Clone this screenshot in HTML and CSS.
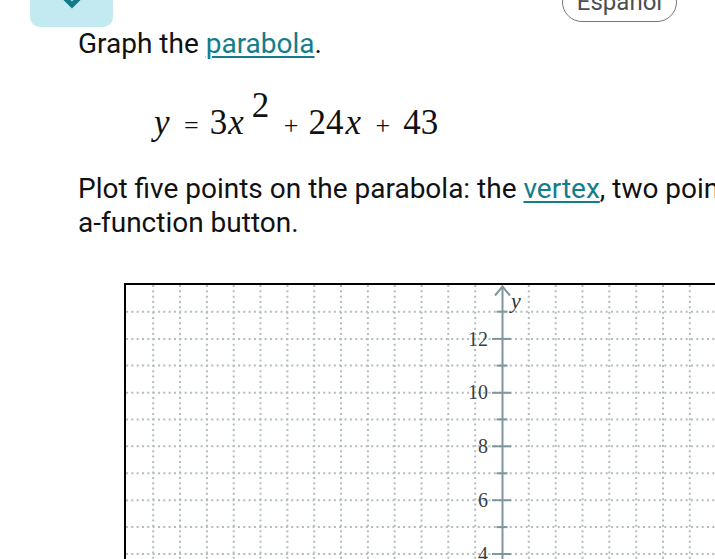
FILE: index.html
```html
<!DOCTYPE html>
<html lang="en">
<head>
<meta charset="utf-8">
<title>Graph the parabola</title>
<link rel="stylesheet" href="styles.css">
</head>
<body>
<div class="page">
  <header class="top">
    <button class="collapse" aria-label="Collapse">
      <svg class="chev" width="26" height="17" viewBox="0 0 26 17"><polyline points="2.5,2.5 13,13 23.5,2.5" fill="none" stroke="#0f7a89" stroke-width="5" stroke-linejoin="miter"/></svg>
    </button>
    <button class="lang">Español</button>
  </header>

  <p class="title">Graph the <a class="term" href="#">parabola</a>.</p>

  <div class="equation"><span class="var">y</span><span class="op op-eq">=</span><span class="num n3">3</span><span class="var vx1">x</span><span class="sup">2</span><span class="op op-p1">+</span><span class="num n24">24</span><span class="var vx2">x</span><span class="op op-p2">+</span><span class="num n43">43</span></div>

  <p class="instructions"><span class="line">Plot five points on the parabola: the <a class="term" href="#">vertex</a>, two points to the left of the vertex, and two points to the right of the vertex. Then click on the graph-</span><span class="line">a-function button.</span></p>

  <div class="graph">
    <svg class="plane" width="700" height="320" viewBox="0 0 700 320">
      <g transform="translate(-126 -286)">
        <g class="grid" stroke="#b2bdbf" stroke-width="2" stroke-dasharray="2 3.33" fill="none">
          <line x1="153.2" y1="286" x2="153.2" y2="606"/>
          <line x1="180.0" y1="286" x2="180.0" y2="606"/>
          <line x1="206.9" y1="286" x2="206.9" y2="606"/>
          <line x1="233.7" y1="286" x2="233.7" y2="606"/>
          <line x1="260.5" y1="286" x2="260.5" y2="606"/>
          <line x1="287.4" y1="286" x2="287.4" y2="606"/>
          <line x1="314.2" y1="286" x2="314.2" y2="606"/>
          <line x1="341.0" y1="286" x2="341.0" y2="606"/>
          <line x1="367.9" y1="286" x2="367.9" y2="606"/>
          <line x1="394.7" y1="286" x2="394.7" y2="606"/>
          <line x1="421.5" y1="286" x2="421.5" y2="606"/>
          <line x1="448.3" y1="286" x2="448.3" y2="606"/>
          <line x1="475.2" y1="286" x2="475.2" y2="606"/>
          <line x1="528.8" y1="286" x2="528.8" y2="606"/>
          <line x1="555.7" y1="286" x2="555.7" y2="606"/>
          <line x1="582.5" y1="286" x2="582.5" y2="606"/>
          <line x1="609.3" y1="286" x2="609.3" y2="606"/>
          <line x1="636.2" y1="286" x2="636.2" y2="606"/>
          <line x1="663.0" y1="286" x2="663.0" y2="606"/>
          <line x1="689.8" y1="286" x2="689.8" y2="606"/>
          <line x1="126" y1="312.7" x2="826" y2="312.7"/>
          <line x1="126" y1="339.9" x2="826" y2="339.9"/>
          <line x1="126" y1="366.6" x2="826" y2="366.6"/>
          <line x1="126" y1="393.8" x2="826" y2="393.8"/>
          <line x1="126" y1="420.4" x2="826" y2="420.4"/>
          <line x1="126" y1="447.3" x2="826" y2="447.3"/>
          <line x1="126" y1="474.3" x2="826" y2="474.3"/>
          <line x1="126" y1="501.2" x2="826" y2="501.2"/>
          <line x1="126" y1="528.1" x2="826" y2="528.1"/>
          <line x1="126" y1="555.0" x2="826" y2="555.0"/>
        </g>
        <g class="axis" stroke="#7f979c" stroke-width="2" fill="none">
          <line x1="502.5" y1="287" x2="502.5" y2="606"/>
          <polyline points="495,296.5 502.5,287.5 510,296.5"/>
          <line x1="496.5" y1="312.7" x2="507.5" y2="312.7"/>
          <line x1="492" y1="339.9" x2="511" y2="339.9"/>
          <line x1="496.5" y1="366.6" x2="507.5" y2="366.6"/>
          <line x1="492" y1="393.8" x2="511" y2="393.8"/>
          <line x1="496.5" y1="420.4" x2="507.5" y2="420.4"/>
          <line x1="492" y1="447.3" x2="511" y2="447.3"/>
          <line x1="496.5" y1="474.3" x2="507.5" y2="474.3"/>
          <line x1="492" y1="501.2" x2="511" y2="501.2"/>
          <line x1="496.5" y1="528.1" x2="507.5" y2="528.1"/>
          <line x1="492" y1="555.0" x2="511" y2="555.0"/>
        </g>
        <text class="axis-name" x="511" y="308.5">y</text>
        <g class="labels" text-anchor="end">
          <text x="488" y="346.5">12</text>
          <text x="488" y="400.3">10</text>
          <text x="488" y="454.1">8</text>
          <text x="488" y="508">6</text>
          <text x="488" y="561.8">4</text>
        </g>
      </g>
    </svg>
  </div>
</div>
</body>
</html>
```

FILE: styles.css
```css
html, body {
  margin: 0;
  padding: 0;
  background: #ffffff;
}

body {
  width: 715px;
  height: 559px;
  overflow: hidden;
  font-family: Roboto, "Liberation Sans", Arial, sans-serif;
  color: #111111;
}

.page {
  width: 715px;
}

.top {
  display: flex;
  justify-content: space-between;
  align-items: flex-start;
  height: 27px;
  padding: 0 38px 0 30px;
}

.collapse {
  width: 83px;
  height: 45px;
  margin-top: -18px;
  padding: 0 0 18px 0;
  border: none;
  border-radius: 10px;
  background: #c3eaf0;
  display: flex;
  justify-content: center;
  align-items: flex-end;
}

.chev {
  display: block;
}

.lang {
  box-sizing: border-box;
  width: 115px;
  height: 40px;
  margin-top: -18px;
  padding: 0;
  border: 1.5px solid #6f7878;
  border-radius: 20px;
  background: #ffffff;
  font-family: Roboto, "Liberation Sans", Arial, sans-serif;
  font-size: 24px;
  line-height: 28px;
  color: #4a4f50;
  text-align: center;
}

.title {
  margin: 0;
  padding-left: 78px;
  font-size: 28px;
  line-height: 34px;
}

.term {
  color: #137d8c;
  text-decoration: underline;
  text-decoration-thickness: 1.5px;
  text-underline-offset: 3px;
}

.equation {
  margin-top: 42px;
  padding-left: 154px;
  height: 40px;
  font-family: "Liberation Serif", "Times New Roman", serif;
  font-size: 35px;
  line-height: 40px;
  color: #111111;
  white-space: nowrap;
}

.var {
  font-style: italic;
}

.op {
  font-size: 26px;
}

.op-eq {
  margin: 0 11px 0 14.5px;
}

.vx1 {
  margin-left: 1px;
}

.sup {
  display: inline-block;
  line-height: 0;
  vertical-align: 17px;
  margin-left: 8px;
}

.op-p1 {
  margin: 0 10px 0 14.5px;
}

.vx2 {
  margin-left: 2px;
}

.op-p2 {
  margin: 0 13px 0 14.5px;
}

.instructions {
  margin: 29px 0 0 0;
  padding-left: 78px;
  font-size: 28px;
  line-height: 34px;
}

.line {
  display: block;
  white-space: nowrap;
}

.graph {
  margin: 43px 0 0 124px;
  width: 700px;
  height: 320px;
  border-top: 2px solid #000000;
  border-left: 2px solid #000000;
  overflow: hidden;
}

.plane {
  display: block;
}

.axis-name {
  font-family: "Liberation Serif", "Times New Roman", serif;
  font-style: italic;
  font-size: 22px;
  fill: #2e3436;
}

.labels text {
  font-family: "Liberation Serif", "Times New Roman", serif;
  font-size: 20px;
  fill: #3a3f42;
}
```
